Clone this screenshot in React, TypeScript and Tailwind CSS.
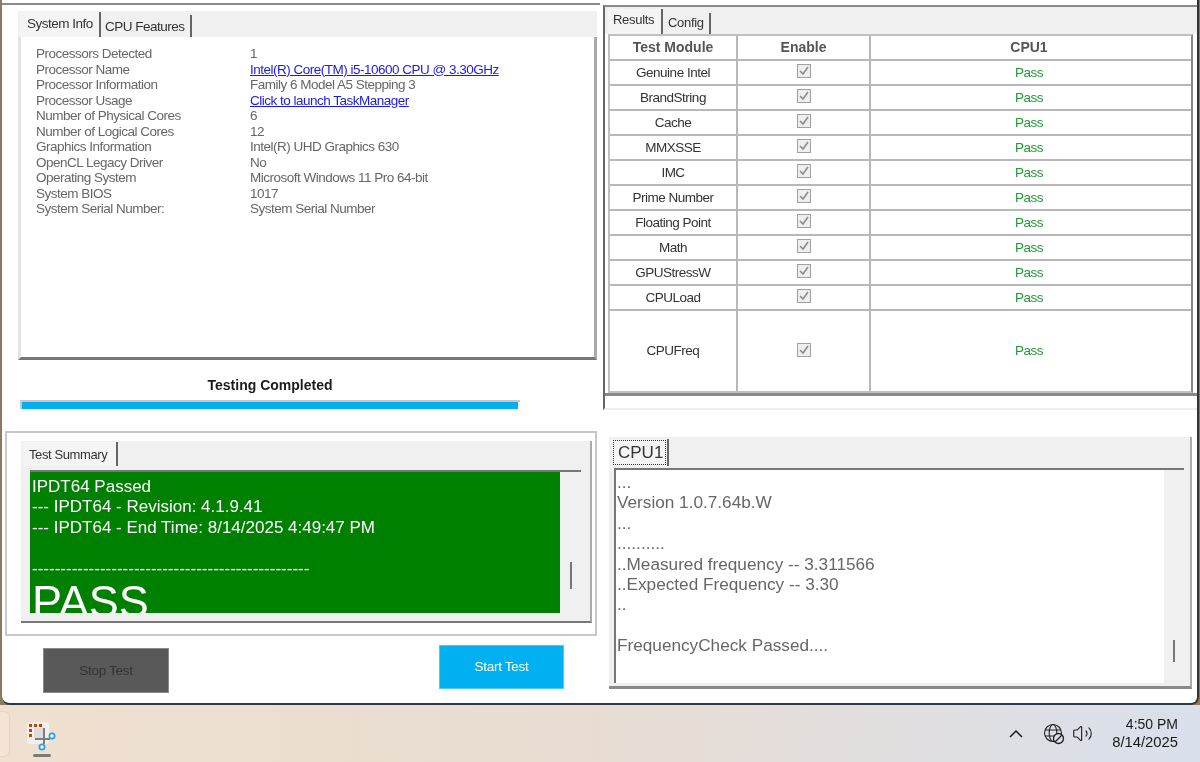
import React from "react";
import { Volume2 } from "lucide-react";

const info: [string, string, boolean?][] = [
  ["Processors Detected", "1"],
  ["Processor Name", "Intel(R) Core(TM) i5-10600 CPU @ 3.30GHz", true],
  ["Processor Information", "Family 6 Model A5 Stepping 3"],
  ["Processor Usage", "Click to launch TaskManager", true],
  ["Number of Physical Cores", "6"],
  ["Number of Logical Cores", "12"],
  ["Graphics Information", "Intel(R) UHD Graphics 630"],
  ["OpenCL Legacy Driver", "No"],
  ["Operating System", "Microsoft Windows 11 Pro 64-bit"],
  ["System BIOS", "1017"],
  ["System Serial Number:", "System Serial Number"],
];

const modules = ["Genuine Intel", "BrandString", "Cache", "MMXSSE", "IMC", "Prime Number", "Floating Point", "Math", "GPUStressW", "CPULoad"];

function Check() {
  return (
    <svg width="14" height="14" viewBox="0 0 14 14" className="block">
      <rect x="0.5" y="0.5" width="13" height="13" fill="#eeeeee" stroke="#a0a0a0" />
      <path d="M3 7l3 3 5-7" fill="none" stroke="#8c8c8c" strokeWidth="1.6" />
    </svg>
  );
}

function Row({ name, tall }: { name: string; tall?: boolean }) {
  return (
    <div className={`grid grid-cols-[128px_133px_1fr] ${tall ? "h-[80px]" : "h-[25px] border-b-2 border-[#b8b8b8]"}`}>
      <div className="flex items-center justify-center border-r-2 border-[#b8b8b8] pt-[1px] text-[13.5px] tracking-[-0.5px] text-[#333]">{name}</div>
      <div className="flex items-center justify-center border-r-2 border-[#b8b8b8]">
        <div className="-mt-[3px]"><Check /></div>
      </div>
      <div className="flex items-center justify-center pt-[1px] text-[13.5px] tracking-[-0.5px] text-[#1f9a35] pr-[4px]">Pass</div>
    </div>
  );
}

export default function App() {
  return (
    <div className="w-[1200px] h-[762px] flex flex-col overflow-hidden bg-[#8d7a5e] font-['Liberation_Sans',sans-serif] blur-[0.4px]">
      <div className="h-[705px] shrink-0 ml-[2px] mr-[1px] flex bg-white rounded-b-lg border-b-2 border-b-[#2f3a48] border-r-2 border-r-[#333]">
        {/* Left column */}
        <div className="w-[598px] shrink-0 flex flex-col">
          <div className="mt-[3px] h-[357px] border-t-2 border-t-[#8a8a8a] pl-[16px] pt-[6px]">
            <div className="w-[579px] h-[349px] flex flex-col">
              <div className="h-[26px] bg-[#f0f0f0] flex items-end pl-[2px] shrink-0 whitespace-nowrap text-[13.5px] tracking-[-0.5px] text-[#333]">
                <div className="h-[25px] w-[81px] border-r-2 border-r-[#666] pl-[7px] pt-[2px] bg-[#f4f4f4]">System Info</div>
                <div className="h-[22px] w-[91px] border-r-2 border-r-[#666] pl-[4px] pt-[2px]">CPU Features</div>
              </div>
              <div className="flex-1 bg-white border-l-[3px] border-l-[#e4e4e4] border-b-[3px] border-b-[#777] border-r-[3px] border-r-[#aaaaaa] pl-[15px] pt-[9px]">
                <div className="grid grid-cols-[214px_1fr] auto-rows-[15.55px] text-[13.5px] tracking-[-0.5px] leading-[15.55px] text-[#666] whitespace-nowrap">
                  {info.map(([k, v, link]) => (
                    <React.Fragment key={k}>
                      <div>{k}</div>
                      <div className={link ? "text-[#1a1aee] underline" : ""}>{v}</div>
                    </React.Fragment>
                  ))}
                </div>
              </div>
            </div>
          </div>

          <div className="h-[71px] pl-[18px] pt-[16px]">
            <div className="w-[500px]">
              <div className="text-center text-[14px] leading-[18px] font-bold text-[#1a1a1a]">Testing Completed</div>
              <div className="mt-[6px] h-[9px] border-t-2 border-l-2 border-[#c8c8c8] pr-[2px]">
                <div className="h-full bg-[#00b0f0]" />
              </div>
            </div>
          </div>

          <div className="ml-[3px] w-[592px] h-[205px] border-2 border-[#c8c8c8] pl-[14px] pt-[8px]">
            <div className="w-[571px] h-[182px] bg-[#f0f0f0] flex flex-col border-b-2 border-b-[#777] border-r-2 border-r-[#aaaaaa]">
              <div className="h-[25px] shrink-0 pl-[2px] pt-[1px]">
                <div className="h-[24px] w-[95px] border-r-2 border-r-[#666] bg-[#f4f4f4] pl-[6px] pt-[3px] text-[13px] tracking-[-0.4px] text-[#333] whitespace-nowrap">Test Summary</div>
              </div>
              <div className="ml-[9px] mr-[9px] mt-[4px] h-[143px] border-t-2 border-t-[#777] flex">
                <div className="w-[530px] h-[141px] bg-[#008000] overflow-hidden text-white text-[17px] leading-[20.4px] pl-[2px] pt-[5px]">
                  <div>IPDT64 Passed</div>
                  <div>--- IPDT64 - Revision: 4.1.9.41</div>
                  <div>--- IPDT64 - End Time: 8/14/2025 4:49:47 PM</div>
                  <div className="h-[20.4px]" />
                  <div>-------------------------------------------------</div>
                  <div className="text-[45px] leading-[48px] -mt-[1px]">PASS</div>
                </div>
                <div className="w-[20px] flex justify-center pl-[1px] pt-[90px]">
                  <div className="w-[2px] h-[27px] bg-[#777]" />
                </div>
              </div>
            </div>
          </div>

          <div className="flex items-start pl-[41px] pt-[9px]">
            <div className="mt-[3px] w-[126px] h-[45px] pt-[1px] bg-[#595959] border border-[#8a8a8a] flex items-center justify-center text-[13.5px] tracking-[-0.3px] text-[#333]">Stop Test</div>
            <div className="ml-[270px] w-[125px] h-[44px] bg-[#00b0f0] border border-[#4cc8f5] flex items-center justify-center text-[13.5px] tracking-[-0.3px] text-white">Start Test</div>
          </div>
        </div>

        {/* Right column */}
        <div className="flex-1 pl-[3px] flex flex-col">
          <div className="mt-[5px] h-[405px] border-t-2 border-t-[#8a8a8a] border-l-2 border-l-[#666] border-b-2 border-b-[#eeeeee] flex flex-col">
            <div className="h-[27px] bg-[#f0f0f0] flex items-end pl-[3px] shrink-0 text-[13px] tracking-[-0.3px] text-[#333] whitespace-nowrap">
              <div className="h-[25px] w-[55px] border-r-2 border-r-[#666] pl-[5px] pt-[1px] bg-[#f4f4f4]">Results</div>
              <div className="h-[21px] w-[48px] border-r-2 border-r-[#666] pl-[5px]">Config</div>
            </div>
            <div className="ml-[3px] w-[585px] border-2 border-[#c0c0c0] border-r-[#888]">
              <div className="grid grid-cols-[128px_133px_1fr] h-[25px] border-b-2 border-[#b8b8b8] text-[14px] font-bold text-[#555]">
                <div className="flex items-center justify-center border-r-2 border-[#b8b8b8]">Test Module</div>
                <div className="flex items-center justify-center border-r-2 border-[#b8b8b8]">Enable</div>
                <div className="flex items-center justify-center pr-[4px]">CPU1</div>
              </div>
              {modules.map((m) => <Row key={m} name={m} />)}
              <Row name="CPUFreq" tall />
            </div>
            <div className="border-t-[3px] border-t-[#888] flex-1" />
          </div>

          <div className="ml-[6px] mt-[27px] w-[583px] h-[252px] bg-[#f0f0f0] flex flex-col border-b-[3px] border-b-[#8a8a8a] border-r-2 border-r-[#aaaaaa]">
            <div className="h-[31px] shrink-0 pl-[3px] pt-[2px]">
              <div className="h-[27px] w-[57px] border-r-2 border-r-[#666] bg-[#f4f4f4] p-[1px]">
                <div className="h-full border border-dotted border-[#333] flex items-center pl-[4px] text-[17px] text-[#333]">CPU1</div>
              </div>
            </div>
            <div className="ml-[5px] mr-[6px] h-[215px] border-t-2 border-t-[#777] border-l-2 border-l-[#777] flex">
              <div className="w-[549px] h-[213px] bg-white text-[#666] text-[17.2px] leading-[20.4px] pl-[1px] pt-[2px] overflow-hidden">
                <div>...</div>
                <div>Version 1.0.7.64b.W</div>
                <div>...</div>
                <div>..........</div>
                <div>..Measured frequency -- 3.311566</div>
                <div>..Expected Frequency -- 3.30</div>
                <div>..</div>
                <div className="h-[20.4px]" />
                <div>FrequencyCheck Passed....</div>
              </div>
              <div className="w-[20px] flex justify-center pt-[170px]">
                <div className="w-[2px] h-[22px] bg-[#777]" />
              </div>
            </div>
          </div>
        </div>
      </div>

      {/* Taskbar */}
      <div className="flex-1 flex items-center bg-gradient-to-r from-[#efe0cf] via-[#e8dcd2] to-[#d9e0ec]">
        <div className="w-[12px] h-[46px] -ml-[2px] rounded-r-md border border-[#e6d5c1] bg-[#f2e5d6]" />
        <svg width="32" height="38" viewBox="0 0 32 38" className="ml-[17px] mt-[15px]">
          <rect x="0" y="0" width="22" height="22" rx="3" fill="#f1f0ee" />
          <rect x="7" y="6" width="11" height="11" fill="#dcdcdc" />
          <g fill="#d83b01">
            <rect x="2" y="2" width="3" height="3" />
            <rect x="7" y="2" width="3" height="3" />
            <rect x="12" y="2" width="3" height="3" />
            <rect x="2" y="7" width="3" height="3" />
            <rect x="2" y="12" width="3" height="3" />
          </g>
          <path d="M17 6v16M8 17h15" stroke="#7d7d7d" strokeWidth="2" fill="none" />
          <circle cx="25" cy="14" r="2.6" fill="#fff" stroke="#2a9fe6" strokeWidth="1.8" />
          <circle cx="15" cy="25" r="2.6" fill="#fff" stroke="#2a9fe6" strokeWidth="1.8" />
          <rect x="6" y="32" width="18" height="3" rx="1.5" fill="#7a7a7a" />
        </svg>
        <div className="ml-auto flex items-center pr-[22px] text-[#1a1a1a]">
          <svg width="16" height="10" viewBox="0 0 16 10" className="mr-[19px]">
            <path d="M2 8l6-6 6 6" fill="none" stroke="#1a1a1a" strokeWidth="1.5" />
          </svg>
          <svg width="22" height="22" viewBox="0 0 22 22" className="mr-[7px]">
            <g fill="none" stroke="#222" strokeWidth="1.1">
              <circle cx="10" cy="10" r="8.5" />
              <ellipse cx="10" cy="10" rx="3.8" ry="8.5" />
              <path d="M2 7h16M2 13h10" />
            </g>
            <circle cx="15.5" cy="15.5" r="5" fill="#dbe0e9" stroke="#222" strokeWidth="1.3" />
            <path d="M12 19l7-7" stroke="#222" strokeWidth="1.3" />
          </svg>
          <Volume2 size={21} strokeWidth={1.3} color="#222" className="mr-[19px]" />
          <div className="flex flex-col items-end leading-[18px] -mt-[2px]">
            <div className="text-[14px]">4:50 PM</div>
            <div className="text-[14.8px]">8/14/2025</div>
          </div>
        </div>
      </div>
    </div>
  );
}
